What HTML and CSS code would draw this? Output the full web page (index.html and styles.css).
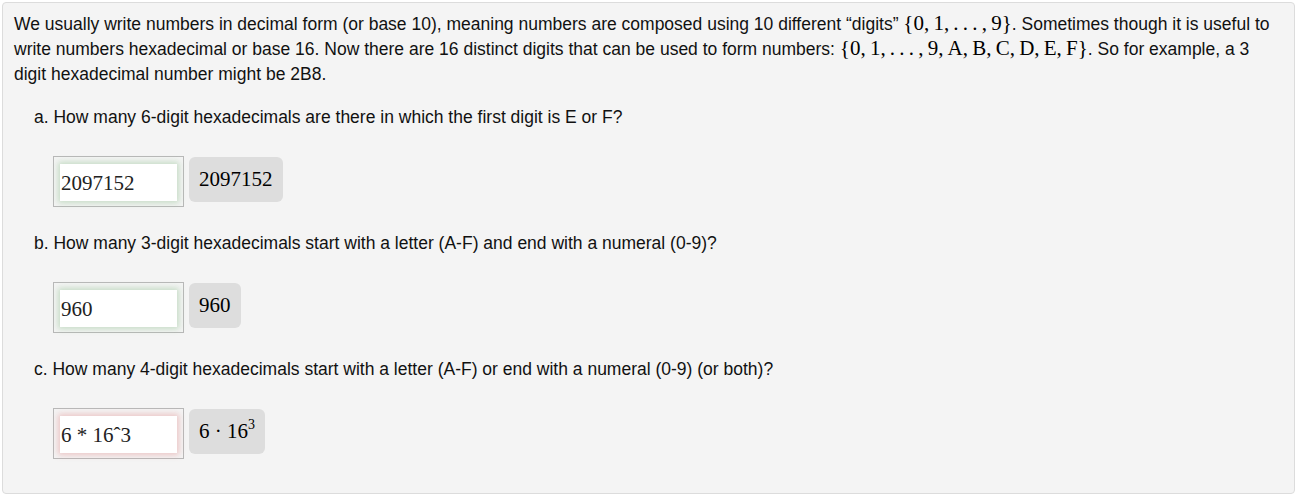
FILE: index.html
```html
<!DOCTYPE html>
<html>
<head>
<meta charset="utf-8">
<link rel="stylesheet" href="styles.css">
</head>
<body>
<div class="panel">
  <p class="intro">We usually write numbers in decimal form (or base 10), meaning numbers are composed using 10 different “digits” <span class="math">{0,&thinsp;1,&thinsp;.&thinsp;.&thinsp;.&thinsp;,&thinsp;9}</span>. Sometimes though it is useful to write numbers hexadecimal or base 16. Now there are 16 distinct digits that can be used to form numbers: <span class="math">{0,&thinsp;1,&thinsp;.&thinsp;.&thinsp;.&thinsp;,&thinsp;9,&thinsp;A,&thinsp;B,&thinsp;C,&thinsp;D,&thinsp;E,&thinsp;F}</span>. So for example, a 3 digit hexadecimal number might be 2B8.</p>

  <div class="question">
    <p class="q-text">a. How many 6-digit hexadecimals are there in which the first digit is E or F?</p>
    <div class="answer-row">
      <div class="answer-box"><div class="answer-input correct">2097152</div></div>
      <div class="preview">2097152</div>
    </div>
  </div>

  <div class="question">
    <p class="q-text">b. How many 3-digit hexadecimals start with a letter (A-F) and end with a numeral (0-9)?</p>
    <div class="answer-row">
      <div class="answer-box"><div class="answer-input correct">960</div></div>
      <div class="preview">960</div>
    </div>
  </div>

  <div class="question">
    <p class="q-text">c. How many 4-digit hexadecimals start with a letter (A-F) or end with a numeral (0-9) (or both)?</p>
    <div class="answer-row">
      <div class="answer-box"><div class="answer-input wrong">6 * 16ˆ3</div></div>
      <div class="preview">6 · 16<sup>3</sup></div>
    </div>
  </div>
</div>
</body>
</html>
```

FILE: styles.css
```css
html, body {
  margin: 0;
  padding: 0;
  background: #ffffff;
}

body {
  font-family: "Liberation Sans", Arial, sans-serif;
  font-size: 17.5px;
  color: #111;
}

.panel {
  margin: 2px 2px 1px 2px;
  box-sizing: border-box;
  height: 492px;
  border: 1px solid #dcdcdc;
  border-radius: 4px;
  background: #f4f4f4;
  padding: 9px 12px 0 11px;
}

.intro {
  margin: 0;
  line-height: 25px;
}

.math {
  font-family: "Liberation Serif", "Times New Roman", serif;
  font-size: 21px;
  line-height: 18px;
  color: #000;
}

.question {
  margin-left: 20px;
}

.q-text {
  margin: 18px 0 0 0;
  line-height: 25px;
}

.answer-row {
  display: flex;
  align-items: flex-start;
  gap: 5px;
  margin: 26px 0 24px 19px;
}

.answer-box {
  box-sizing: border-box;
  width: 131px;
  height: 51px;
  border: 1px solid #b8b8b8;
  padding: 7px 6px 6px 6px;
}

.answer-input {
  height: 37px;
  background: #fff;
  font-family: "Liberation Serif", "Times New Roman", serif;
  font-size: 21px;
  line-height: 38px;
  padding-left: 1px;
  color: #222;
}

.answer-input.correct {
  box-shadow: 0 0 6px 2px rgba(140, 190, 140, 0.45);
}

.answer-input.wrong {
  box-shadow: 0 0 6px 2px rgba(225, 140, 140, 0.45);
}

.preview {
  margin-top: 1px;
  height: 45px;
  box-sizing: border-box;
  padding: 0 10px;
  background: #dddddd;
  border-radius: 6px;
  font-family: "Liberation Serif", "Times New Roman", serif;
  font-size: 21px;
  line-height: 45px;
  color: #000;
}

.preview sup {
  font-size: 14px;
  line-height: 0;
  vertical-align: 9px;
}
```
